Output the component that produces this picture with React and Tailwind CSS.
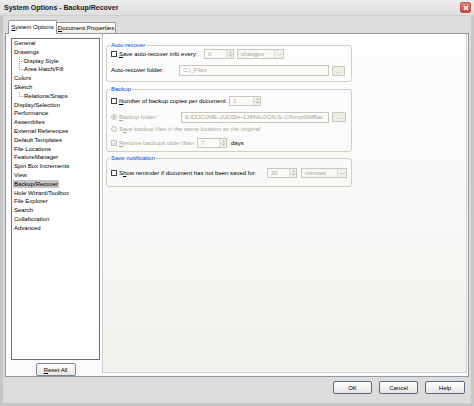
import React from "react";

const Check = ({ checked, disabled }) => (
  <span
    className={
      "w-[6px] h-[6px] shrink-0 border flex items-center justify-center " +
      (disabled ? "border-[#c4c2b6] bg-[#f4f4f0]" : "border-[#3f3f3f] bg-white")
    }
  >
    {checked && (
      <svg width="5" height="5" viewBox="0 0 5 5">
        <path d="M0.6 2.4 L2 3.8 L4.4 1" stroke="#b0ad9f" strokeWidth="0.9" fill="none" />
      </svg>
    )}
  </span>
);

const Radio = ({ selected }) => (
  <span className="w-[6px] h-[6px] shrink-0 rounded-full border border-[#c4c2b6] bg-[#f4f4f0] flex items-center justify-center">
    {selected && <span className="w-[2px] h-[2px] rounded-full bg-[#aca899]" />}
  </span>
);

const SpinArrows = () => (
  <span className="w-[7px] shrink-0 flex flex-col border-l border-[#dddbd0]">
    <span className="flex-1 flex items-center justify-center bg-[#f1f0ea] border-b border-[#dddbd0]">
      <svg width="3" height="2" viewBox="0 0 3 2"><path d="M0 2 L1.5 0 L3 2 Z" fill="#c0bdb0" /></svg>
    </span>
    <span className="flex-1 flex items-center justify-center bg-[#f1f0ea]">
      <svg width="3" height="2" viewBox="0 0 3 2"><path d="M0 0 L1.5 2 L3 0 Z" fill="#c0bdb0" /></svg>
    </span>
  </span>
);

const Spin = ({ value, className }) => (
  <span className={"flex h-[10px] border border-[#c9c7ba] bg-[#fbfbf9] " + className}>
    <span className="flex-1 pl-[3px] leading-[8px] text-[#aca899]">{value}</span>
    <SpinArrows />
  </span>
);

const Drop = ({ value, className }) => (
  <span className={"flex h-[10px] border border-[#c9c7ba] bg-[#f7f7f4] " + className}>
    <span className="flex-1 pl-[3px] leading-[8px] text-[#aca899]">{value}</span>
    <span className="w-[9px] shrink-0 flex items-center justify-center bg-[#f1f0ea] border-l border-[#dddbd0]">
      <svg width="5" height="3" viewBox="0 0 5 3"><path d="M0.5 0.5 L2.5 2.5 L4.5 0.5" stroke="#c0bdb0" strokeWidth="0.9" fill="none" /></svg>
    </span>
  </span>
);

const Dots = ({ className }) => (
  <span className={"h-[10px] shrink-0 border border-[#c9c7ba] rounded-[1px] bg-[#eeede6] flex items-center justify-center leading-[6px] text-[#aca899] " + className}>
    ...
  </span>
);

const Field = ({ value, className }) => (
  <span className={"h-[11px] border border-[#c9c7ba] bg-[#fbfbf9] pl-[3px] leading-[9px] text-[#aca899] overflow-hidden whitespace-nowrap " + className}>
    {value}
  </span>
);

const Group = ({ title, className, children }) => (
  <fieldset className={"w-[246px] border border-[#d0d0bf] rounded-[3px] pl-[4px] pr-[2px] " + className}>
    <legend className="-ml-[1px] px-[1px] leading-[7px] text-[6px] text-[#0046d5]">{title}</legend>
    {children}
  </fieldset>
);

const TreeLine = ({ last }) => (
  <svg width="10" height="9" viewBox="0 0 10 9" className="shrink-0">
    <line x1="5.5" y1="0" x2="5.5" y2={last ? 4.5 : 9} stroke="#9a9a9a" strokeWidth="1" strokeDasharray="1 1" />
    <line x1="5.5" y1="4.5" x2="10" y2="4.5" stroke="#9a9a9a" strokeWidth="1" strokeDasharray="1 1" />
  </svg>
);

const items = [
  { t: "General" },
  { t: "Drawings" },
  { t: "Display Style", c: true },
  { t: "Area Hatch/Fill", c: true, last: true },
  { t: "Colors" },
  { t: "Sketch" },
  { t: "Relations/Snaps", c: true, last: true },
  { t: "Display/Selection" },
  { t: "Performance" },
  { t: "Assemblies" },
  { t: "External References" },
  { t: "Default Templates" },
  { t: "File Locations" },
  { t: "FeatureManager" },
  { t: "Spin Box Increments" },
  { t: "View" },
  { t: "Backup/Recover", sel: true },
  { t: "Hole Wizard/Toolbox" },
  { t: "File Explorer" },
  { t: "Search" },
  { t: "Collaboration" },
  { t: "Advanced" },
];

const Btn = ({ children, className }) => (
  <span
    className={
      "h-[13px] flex items-center justify-center rounded-[2px] border border-[#5d6a80] bg-gradient-to-b from-[#ffffff] to-[#e6e5df] text-[6px] leading-[6px] text-black " +
      className
    }
  >
    {children}
  </span>
);

export default function App() {
  return (
    <div className="w-[474px] h-[406px] flex flex-col overflow-hidden bg-[#dcdcdc] font-['Liberation_Sans',Arial,sans-serif] text-[6px] text-black">
      {/* Title bar */}
      <div className="h-[16px] shrink-0 flex items-center justify-between pl-[4px] pr-[3px] bg-gradient-to-b from-[#ececec] to-[#dedede] border-b border-[#cfcfcf]">
        <span className="font-bold text-[7px] leading-[8px] text-[#1a1a1a]">System Options - Backup/Recover</span>
        <span className="w-[11px] h-[11px] rounded-[2px] bg-gradient-to-b from-[#e7817a] to-[#c9453c] border border-[#b85a55] flex items-center justify-center">
          <svg width="6" height="6" viewBox="0 0 6 6">
            <path d="M1 1 L5 5 M5 1 L1 5" stroke="#ffffff" strokeWidth="1.3" />
          </svg>
        </span>
      </div>

      {/* Body */}
      <div className="flex-1 flex flex-col border-l-[3px] border-r-[3px] border-b-[3px] border-[#c6c6c6] pl-[2px] pr-[2px] pt-[4px]">
        {/* Tabs */}
        <div className="h-[13px] flex items-end pl-[3px]">
          <span className="relative z-10 -mb-[1px] h-[14px] w-[49px] flex items-center justify-center border border-b-0 border-[#919b9c] rounded-t-[2px] bg-white leading-[7px]">
            <span><span className="underline">S</span>ystem Options</span>
          </span>
          <span className="h-[11px] w-[59px] flex items-center justify-center border border-b-0 border-l-0 border-[#919b9c] rounded-tr-[2px] bg-gradient-to-b from-[#ffffff] to-[#ecebe5] leading-[7px]">
            <span><span className="underline">D</span>ocument Properties</span>
          </span>
        </div>

        {/* Panel */}
        <div className="h-[344px] flex border border-[#919b9c] bg-[#fcfcfe]">
          {/* Left column */}
          <div className="w-[96px] shrink-0 pl-[5px] pt-[4px]">
            <div className="w-[89px] flex flex-col items-center">
              <div className="w-[89px] h-[322px] border border-[#6f6f6f] bg-white pl-[2px] pt-[0px]">
                {items.map((it) => (
                  <div key={it.t} className="h-[8.8px] flex items-center leading-[8.8px] whitespace-nowrap">
                    {it.c && (
                      <span className="flex">
                        <TreeLine last={it.last} />
                      </span>
                    )}
                    <span className={it.sel ? "bg-[#c3c3c8] px-[1px] -ml-[1px] leading-[8px]" : ""}>{it.t}</span>
                  </div>
                ))}
              </div>
              <Btn className="mt-[3px] w-[40px] h-[11px] border-[#7a8394]">
                <span><span className="underline">R</span>eset All</span>
              </Btn>
            </div>
          </div>

          {/* Right page */}
          <div className="flex-1 mr-[1px] mb-[3px] border-l border-r border-b border-[#cfcfcf] bg-gradient-to-b from-[#fdfdfe] via-[#f9f9f8] to-[#f2f1eb] pl-[3px] pt-[8px]">
            <Group title="Auto-recover" className="pb-[5px]">
              <div className="h-[10px] flex items-center">
                <Check />
                <span className="ml-[2px] w-[85px] leading-[7px]"><span className="underline">S</span>ave auto-recover info every:</span>
                <Spin value="0" className="w-[30px]" />
                <Drop value="changes" className="ml-[3px] w-[47px]" />
              </div>
              <div className="mt-[6px] h-[11px] flex items-center">
                <span className="w-[68px] leading-[7px]">Auto-recover folder:</span>
                <Field value="C:\_Files" className="w-[150px]" />
                <Dots className="ml-[3px] w-[13px]" />
              </div>
            </Group>

            <Group title="Backup" className="mt-[4px] pt-[3px] pb-[3px]">
              <div className="h-[10px] flex items-center">
                <Check />
                <span className="ml-[2px] w-[110px] leading-[7px]"><span className="underline">N</span>umber of backup copies per document:</span>
                <Spin value="1" className="w-[32px]" />
              </div>
              <div className="mt-[6px] h-[10px] flex items-center">
                <Radio selected />
                <span className="ml-[2px] w-[62px] leading-[7px] text-[#aca899]"><span className="underline">B</span>ackup folder:</span>
                <Field value="E:\DOCUME~1\JOSH~1.MIN\LOCALS~1\Temp\SWBac" className="w-[148px] h-[10px] leading-[8px] tracking-[-0.25px] pl-[2px]" />
                <Dots className="ml-[3px] w-[14px]" />
              </div>
              <div className="mt-[3px] h-[8px] flex items-center">
                <Radio />
                <span className="ml-[2px] leading-[7px] text-[#aca899]">S<span className="underline">a</span>ve backup files in the same location as the original</span>
              </div>
              <div className="mt-[5px] h-[10px] flex items-center">
                <Check checked disabled />
                <span className="ml-[2px] w-[78px] leading-[7px] text-[#aca899]"><span className="underline">R</span>emove backups older than</span>
                <Spin value="7" className="w-[30px]" />
                <span className="ml-[4px] leading-[7px]">days</span>
              </div>
            </Group>

            <Group title="Save notification" className="mt-[3px] pt-[6px] pb-[8px]">
              <div className="h-[10px] flex items-center">
                <Check />
                <span className="ml-[2px] w-[148px] leading-[7px]">S<span className="underline">h</span>ow reminder if document has not been saved for:</span>
                <Spin value="20" className="w-[30px]" />
                <Drop value="minutes" className="ml-[4px] w-[46px]" />
              </div>
            </Group>
          </div>
        </div>

        {/* Bottom buttons */}
        <div className="mt-[4px] flex justify-end gap-[7px] pr-[4px]">
          <Btn className="w-[39px] border-[#3d5c8c]">OK</Btn>
          <Btn className="w-[39px]">Cancel</Btn>
          <Btn className="w-[40px]">Help</Btn>
        </div>
      </div>
    </div>
  );
}
